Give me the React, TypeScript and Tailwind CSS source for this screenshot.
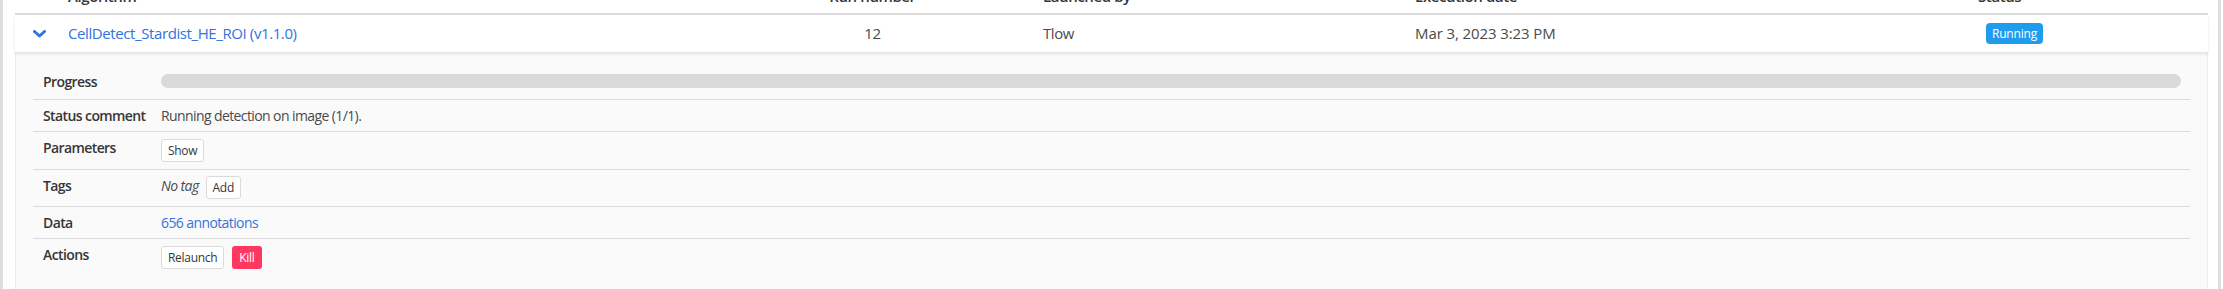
import { ArrowUp } from 'lucide-react';

const cols = 'grid grid-cols-[45px_650px_325px_372px_563px_1fr]';

function SortMark({ gap }: { gap: string }) {
	return <ArrowUp size={12} strokeWidth={2} className={`${gap} inline-block text-[#c8c8c8]`} />;
}

function Header() {
	return (
		<div className="h-[15px] overflow-hidden border-b-2 border-[#dbdbdb]">
			<div className={`${cols} -mt-[14px] text-[15px] leading-[20px] font-semibold tracking-[-0.4px] text-[#363636]`}>
				<div />
				<div className="flex items-center pl-2">
					Algorithm
					<SortMark gap="ml-[30px]" />
				</div>
				<div className="text-center">Run number</div>
				<div className="flex items-center pl-2">
					Launched by
					<SortMark gap="ml-[30px]" />
				</div>
				<div className="flex items-center pl-2">
					Execution date
					<SortMark gap="ml-[8px]" />
				</div>
				<div className="flex items-center pl-2">
					Status
					<SortMark gap="ml-[28px]" />
				</div>
			</div>
		</div>
	);
}

function JobRow() {
	return (
		<div className={`${cols} relative h-[37px] items-center bg-white text-[15px] tracking-[-0.4px] text-[#4a4a4a] shadow-[0_2px_3px_rgba(10,10,10,0.1)]`}>
			<div className="flex justify-center pl-[4px]">
				<svg width="13" height="8" viewBox="0 0 13 8" fill="none">
					<polyline points="1.5,1.5 6.5,6 11.5,1.5" stroke="#3273dc" strokeWidth="3" strokeLinecap="round" strokeLinejoin="round" />
				</svg>
			</div>
			<div className="pl-2 text-[#3273dc]">CellDetect_Stardist_HE_ROI (v1.1.0)</div>
			<div className="text-center">12</div>
			<div className="pl-2">Tlow</div>
			<div className="pl-2 tracking-[-0.1px]">Mar 3, 2023 3:23 PM</div>
			<div className="pl-4">
				<span className="flex h-[21px] w-[57px] items-center justify-center rounded-[4px] bg-[#209cee] text-[12px] tracking-[-0.2px] text-white">
					Running
				</span>
			</div>
		</div>
	);
}

function SmallButton({ label, danger }: { label: string; danger?: boolean }) {
	return (
		<button
			className={
				danger
					? 'flex h-[23px] items-center rounded-[3px] border border-transparent bg-[#ff3860] px-[6px] text-[12px] tracking-[-0.3px] text-white'
					: 'flex h-[23px] items-center rounded-[3px] border border-[#dbdbdb] bg-white px-[6px] text-[12px] tracking-[-0.3px] text-[#363636]'
			}
		>
			{label}
		</button>
	);
}

function DetailRow({ label, children, last, value }: { label: string; children: React.ReactNode; last?: boolean; value: string }) {
	return (
		<div className={`grid grid-cols-[128px_1fr] ${last ? '' : 'border-b border-[#dbdbdb]'}`}>
			<div className="pl-[10px] pt-[6px] text-[14px] leading-[20px] font-semibold tracking-[-0.6px] text-[#363636]">{label}</div>
			<div className={value}>{children}</div>
		</div>
	);
}

function JobDetails() {
	return (
		<div className="h-[237px] border-x border-[#ececec] bg-[#fafafa] px-[17px] pt-[14px] text-[14px] leading-[20px] tracking-[-0.6px] text-[#4a4a4a]">
			<DetailRow label="Progress" value="pt-[8px] pb-[11px] pr-[9px]">
				<div className="h-[14px] w-full rounded-full bg-[#dadada]" />
			</DetailRow>
			<DetailRow label="Status comment" value="pt-[6px] pb-[5px]">
				Running detection on image (1/1).
			</DetailRow>
			<DetailRow label="Parameters" value="pt-[7px] pb-[7px]">
				<div className="flex">
					<SmallButton label="Show" />
				</div>
			</DetailRow>
			<DetailRow label="Tags" value="pt-[6px] pb-[7px]">
				<div className="flex items-start gap-[7px]">
					<span className="italic">No tag</span>
					<SmallButton label="Add" />
				</div>
			</DetailRow>
			<DetailRow label="Data" value="pt-[6px] pb-[5px]">
				<span className="text-[#3273dc]">656 annotations</span>
			</DetailRow>
			<DetailRow label="Actions" value="pt-[7px]" last>
				<div className="flex gap-[8px]">
					<SmallButton label="Relaunch" />
					<SmallButton label="Kill" danger />
				</div>
			</DetailRow>
		</div>
	);
}

export default function App() {
	return (
		<div className="h-[289px] overflow-hidden bg-white pr-[2px] font-['Open_Sans',sans-serif]">
			<div className="h-full border-x-[3px] border-[#dedede] pl-[12px] pr-[10px]">
				<Header />
				<JobRow />
				<JobDetails />
			</div>
		</div>
	);
}
